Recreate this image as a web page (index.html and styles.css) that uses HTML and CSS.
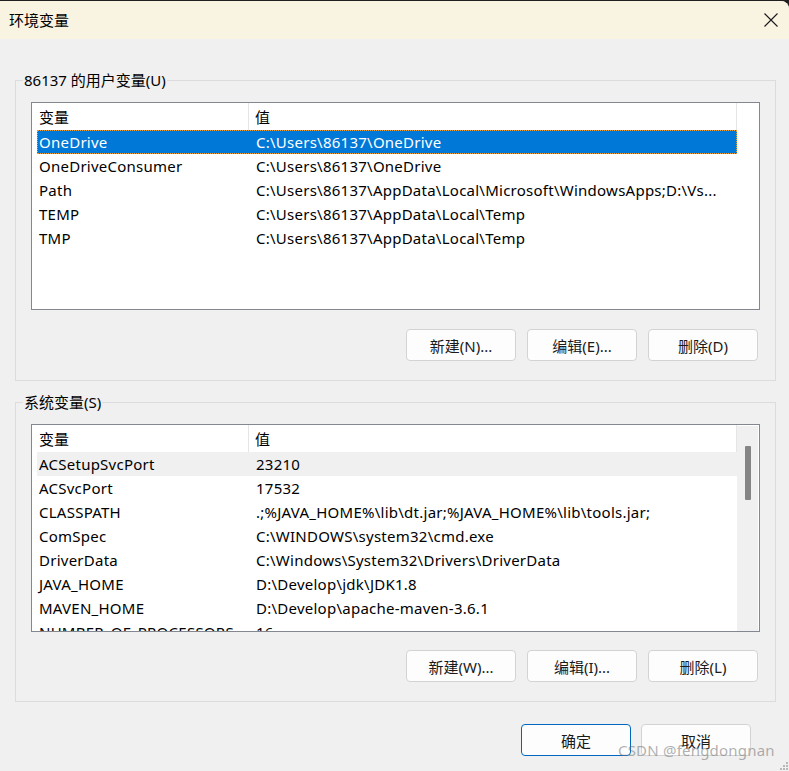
FILE: index.html
```html
<!DOCTYPE html>
<html lang="zh-CN">
<head>
  <meta charset="UTF-8" />
  <title>环境变量</title>
  <link rel="stylesheet" href="styles.css">
</head>
<body>
  <div class="window">
    <div class="titlebar">
      <span class="title">环境变量</span>
      <button class="close" aria-label="关闭">
        <svg width="14" height="14" viewBox="0 0 14 14"><path d="M0.5 0.5 L13.5 13.5 M13.5 0.5 L0.5 13.5" stroke="#1a1a1a" stroke-width="1.1" fill="none"/></svg>
      </button>
    </div>

    <div class="content">
      <fieldset class="group first">
        <legend>86137 的用户变量(U)</legend>
        <div class="list">
          <div class="list-main">
            <div class="list-head">
              <div class="head-name">变量</div>
              <div class="head-value">值</div>
            </div>
            <div class="rows">
              <div class="row selected"><span>OneDrive</span><span>C:\Users\86137\OneDrive</span></div>
              <div class="row"><span>OneDriveConsumer</span><span>C:\Users\86137\OneDrive</span></div>
              <div class="row"><span>Path</span><span>C:\Users\86137\AppData\Local\Microsoft\WindowsApps;D:\Vs...</span></div>
              <div class="row"><span>TEMP</span><span>C:\Users\86137\AppData\Local\Temp</span></div>
              <div class="row"><span>TMP</span><span>C:\Users\86137\AppData\Local\Temp</span></div>
            </div>
          </div>
          <div class="scroll-space"></div>
        </div>
        <div class="actions">
          <button class="btn">新建(N)...</button>
          <button class="btn">编辑(E)...</button>
          <button class="btn">删除(D)</button>
        </div>
      </fieldset>

      <fieldset class="group second">
        <legend>系统变量(S)</legend>
        <div class="list">
          <div class="list-main">
            <div class="list-head">
              <div class="head-name">变量</div>
              <div class="head-value">值</div>
            </div>
            <div class="rows">
              <div class="row hover"><span>ACSetupSvcPort</span><span>23210</span></div>
              <div class="row"><span>ACSvcPort</span><span>17532</span></div>
              <div class="row"><span>CLASSPATH</span><span>.;%JAVA_HOME%\lib\dt.jar;%JAVA_HOME%\lib\tools.jar;</span></div>
              <div class="row"><span>ComSpec</span><span>C:\WINDOWS\system32\cmd.exe</span></div>
              <div class="row"><span>DriverData</span><span>C:\Windows\System32\Drivers\DriverData</span></div>
              <div class="row"><span>JAVA_HOME</span><span>D:\Develop\jdk\JDK1.8</span></div>
              <div class="row"><span>MAVEN_HOME</span><span>D:\Develop\apache-maven-3.6.1</span></div>
              <div class="row"><span>NUMBER_OF_PROCESSORS</span><span>16</span></div>
            </div>
          </div>
          <div class="scrollbar"><div class="thumb"></div></div>
        </div>
        <div class="actions">
          <button class="btn">新建(W)...</button>
          <button class="btn">编辑(I)...</button>
          <button class="btn">删除(L)</button>
        </div>
      </fieldset>

      <div class="footer">
        <button class="btn primary">确定</button>
        <button class="btn">取消</button>
      </div>
    </div>

    <div class="watermark">CSDN @fengdongnan</div>
    <svg class="grip" width="8" height="8" viewBox="0 0 8 8">
      <rect x="6" y="0" width="2" height="2" fill="#b8b8b8"/>
      <rect x="3" y="3" width="2" height="2" fill="#b8b8b8"/>
      <rect x="6" y="3" width="2" height="2" fill="#b8b8b8"/>
      <rect x="0" y="6" width="2" height="2" fill="#b8b8b8"/>
      <rect x="3" y="6" width="2" height="2" fill="#b8b8b8"/>
      <rect x="6" y="6" width="2" height="2" fill="#b8b8b8"/>
    </svg>
  </div>
</body>
</html>
```

FILE: styles.css
```css
html, body {
  margin: 0;
  height: 100%;
  overflow: hidden;
  background: #202020;
}
body {
  font-family: "Noto Sans", "Noto Sans CJK SC", sans-serif;
  font-size: 15px;
  color: #000;
}
.window {
  position: relative;
  margin-top: 1px;
  height: 770px;
  background: #f0f0f0;
  border-top-right-radius: 8px;
  overflow: hidden;
}
.titlebar {
  height: 38px;
  background: #f9f3e2;
  display: flex;
  align-items: center;
  justify-content: space-between;
  padding: 0 11px 0 9px;
}
.title {
  font-size: 15px;
  line-height: 20px;
}
.close {
  border: none;
  background: none;
  padding: 0;
  width: 14px;
  height: 14px;
  display: flex;
}
.content {
  padding: 31px 13px 0 15px;
}
.group {
  margin: 0;
  border: 1px solid #dcdcdc;
  padding: 0 15px 19px 15px;
  min-width: 0;
}
.group.second {
  margin-top: 11px;
}
.group legend {
  margin-left: -8px;
  padding: 0 1px;
  line-height: 20px;
}
.list {
  margin-top: 12px;
  height: 208px;
  box-sizing: border-box;
  border: 1px solid #828790;
  background: #fff;
  display: flex;
  overflow: hidden;
}
.list-main {
  flex: 1;
  min-width: 0;
}
.scroll-space {
  width: 22px;
}
.scrollbar {
  width: 21px;
  margin: 1px 1px 0 0;
  background: #f0f0f0;
  display: flex;
  justify-content: center;
  padding-top: 20px;
  box-sizing: border-box;
}
.thumb {
  width: 6px;
  height: 54px;
  background: #858585;
  border-radius: 1px;
}
.list-head {
  display: flex;
  height: 27px;
  line-height: 29px;
}
.head-name {
  width: 217px;
  padding-left: 7px;
  box-sizing: border-box;
  border-right: 1px solid #e5e5e5;
}
.head-value {
  flex: 1;
  padding-left: 6px;
  border-right: 1px solid #e5e5e5;
}
.rows {
  padding-left: 5px;
}
.row {
  display: grid;
  grid-template-columns: 217px 1fr;
  height: 24px;
  line-height: 24px;
  white-space: nowrap;
  letter-spacing: 0.25px;
}
.row span {
  padding: 0 2px;
  overflow: hidden;
}
.row.selected {
  background: #0078d7;
  color: #fff;
  outline: 1px dotted #e8a03c;
  outline-offset: -1px;
}
.row.hover {
  background: #f0f0f0;
}
.actions {
  display: flex;
  justify-content: flex-end;
  gap: 11px;
  margin-top: 18px;
  padding-right: 2px;
}
.first .actions {
  margin-top: 19px;
}
.btn {
  width: 110px;
  height: 32px;
  font: inherit;
  color: #1a1a1a;
  background: #fdfdfd;
  border: 1px solid #d3d3d3;
  border-radius: 4px;
  padding: 0;
}
.btn.primary {
  border-color: #0067c0;
}
.footer {
  display: flex;
  justify-content: flex-end;
  gap: 10px;
  margin-top: 22px;
  padding-right: 25px;
}
.watermark {
  position: absolute;
  left: 618px;
  top: 739px;
  font-size: 15px;
  line-height: 20px;
  color: rgba(110, 110, 110, 0.55);
  letter-spacing: 0.2px;
}
.grip {
  position: absolute;
  right: 1px;
  bottom: 1px;
}
```
